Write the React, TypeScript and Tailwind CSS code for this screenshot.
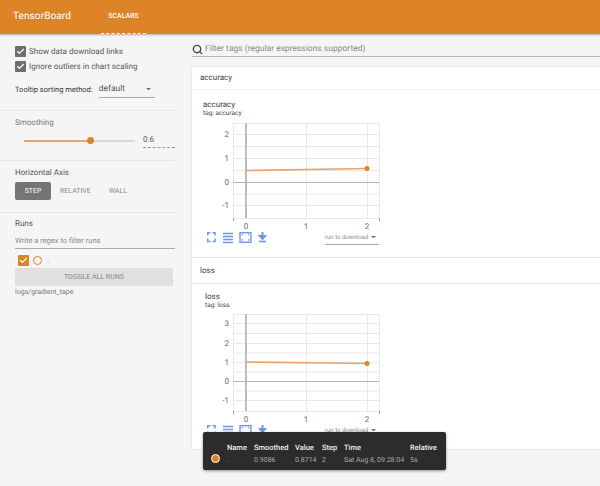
import { Check, Search } from 'lucide-react';

const orange = '#dd8426';

function TickBox({ color = 'bg-[#6e6e6e]' }: { color?: string }) {
  return (
    <span className={`flex h-[11px] w-[11px] items-center justify-center rounded-[1px] ${color}`}>
      <Check size={9} strokeWidth={3} className="text-white" />
    </span>
  );
}

function Divider() {
  return <div className="w-[175px] border-t border-[#e6e6e6]" />;
}

function Caret({ size = 5 }: { size?: number }) {
  return (
    <svg width={size} height={size / 2} viewBox="0 0 10 5" className="block">
      <path d="M0 0H10L5 5Z" fill="#757575" />
    </svg>
  );
}

function Chart({ ticks, y0, top, bottom, line }: {
  ticks: { label: string; y: number }[];
  y0: number;
  top: number;
  bottom: number;
  line: [number, number];
}) {
  // svg starts at x=200 of the page, coordinates below are local to it
  const minor = ticks.slice(0, -1).map((t, i) => (t.y + ticks[i + 1].y) / 2);
  return (
    <svg width="190" height={bottom + 12} className="block">
      <g stroke="#e8e8e8" strokeWidth="1">
        <rect x="33.5" y={top + 0.5} width="146" height={bottom - top} fill="none" />
        {[...ticks.map(t => t.y), ...minor].map(y => (
          <line key={y} x1="33" x2="179" y1={y + 0.5} y2={y + 0.5} />
        ))}
        <line x1="106.5" x2="106.5" y1={top} y2={bottom} />
        <line x1="167.5" x2="167.5" y1={top} y2={bottom} />
      </g>
      <line x1="46" x2="46" y1={top} y2={bottom} stroke="#bdbdbd" strokeWidth="2" />
      <line x1="33" x2="179" y1={y0 + 0.5} y2={y0 + 0.5} stroke="#b5b5b5" strokeWidth="1" />
      <g stroke="#9e9e9e">
        <line x1="33.5" x2="33.5" y1={bottom} y2={bottom + 3} />
        <line x1="179.5" x2="179.5" y1={bottom} y2={bottom + 3} />
      </g>
      <line x1="46" x2="167" y1={line[0]} y2={line[1]} stroke="#e9a36a" strokeWidth="1.6" />
      <circle cx="167" cy={line[1]} r="2.5" fill={orange} />
      <g fontSize="8" fill="#666" fontFamily="Roboto, sans-serif">
        {ticks.map(t => (
          <text key={t.label} x="29" y={t.y + 3} textAnchor="end">{t.label}</text>
        ))}
        <text x="46" y={bottom + 11} textAnchor="middle">0</text>
        <text x="106" y={bottom + 11} textAnchor="middle">1</text>
        <text x="167" y={bottom + 11} textAnchor="middle">2</text>
      </g>
    </svg>
  );
}

function ChartTools() {
  return (
    <div className="flex h-[15px] items-center">
      <svg width="72" height="12" viewBox="0 0 72 12" fill="none" stroke="#6a9ae6" strokeWidth="1.4" className="ml-[7px] block">
        <path d="M0.7 3.5V0.7H3.5M5.5 0.7H8V3.5M8 6.5V9.5H5.5M3.5 9.5H0.7V6.5" strokeWidth="1.5" />
        <path d="M16 1.5H26M16 4.5H26M16 7.5H26M16 10.5H26" strokeWidth="1.3" />
        <rect x="33" y="0.7" width="11" height="9.6" />
        <path d="M35 3.5V2.5H36M41 2.5H42V3.5M42 7V8.3H41M36 8.3H35V7" strokeWidth="1" />
        <path d="M55.5 0V4.5M53 4L55.5 7L58 4Z" strokeWidth="2" fill="#6a9ae6" />
        <path d="M52 9.5H59" strokeWidth="1.6" />
      </svg>
      <div className="ml-[46px] flex h-[15px] w-[54px] items-center justify-between border-b border-[#a8a8a8] pr-[3px] text-[6px] text-[#8a8a8a]">
        <span>run to download</span>
        <Caret />
      </div>
    </div>
  );
}

export default function App() {
  return (
    <div className="relative flex h-[486px] w-[600px] flex-col overflow-hidden bg-[#f5f5f5] font-['Roboto',sans-serif] [text-rendering:geometricPrecision]">
      <header className="flex h-[34px] shrink-0 items-stretch bg-[#dd8426] pl-[13px] shadow-[0_1px_2px_rgba(0,0,0,0.3)]">
        <div className="mr-[30px] flex w-[58px] items-center whitespace-nowrap text-[10.2px] text-white">TensorBoard</div>
        <div className="flex w-[45px] items-center justify-center border-b border-dashed border-white text-[7px] font-medium text-white">SCALARS</div>
      </header>

      <div className="flex min-h-0 flex-1">
        <aside className="w-[190px] shrink-0">
          <div className="flex flex-col gap-[3px] pl-[15px] pt-[11px] text-[8.1px] leading-[12px] text-[#555]">
            <label className="flex items-center gap-[3px]"><TickBox /> Show data download links</label>
            <label className="flex items-center gap-[3px]"><TickBox /> Ignore outliers in chart scaling</label>
          </div>
          <div className="mt-[9px] flex items-center pl-[15px] text-[7.5px] text-[#333]">
            <span>Tooltip sorting method:</span>
            <div className="ml-[6px] flex h-[17px] w-[56px] items-center justify-between border-b border-[#aaa] pr-[4px] text-[8.5px] text-[#555]">
              default
              <Caret />
            </div>
          </div>
          <div className="mt-[12px]"><Divider /></div>

          <div className="pl-[15px] pt-[6px] text-[8px] leading-[12px] text-[#777]">Smoothing</div>
          <div className="mt-[4px] flex items-center pl-[24px]">
            <div className="relative h-[2px] w-[111px] bg-[#d8d8d8]">
              <div className="h-full w-[67px] bg-[#e9a36a]" />
              <span className="absolute left-[63px] top-[-2.5px] h-[7px] w-[7px] rounded-full bg-[#dd8426]" />
            </div>
            <div className="ml-[8px] flex h-[15px] w-[32px] items-center border-b border-dashed border-[#999] text-[8px] text-[#555]">0.6</div>
          </div>
          <div className="mt-[12px]"><Divider /></div>

          <div className="pl-[15px] pt-[6px] text-[8px] leading-[12px] text-[#555]">Horizontal Axis</div>
          <div className="mt-[3px] flex items-center pl-[15px] text-[7px]">
            <div className="flex h-[18px] w-[36px] items-center justify-center rounded-[2px] bg-[#757575] text-white">STEP</div>
            <div className="ml-[9px] text-[#8a8a8a]">RELATIVE</div>
            <div className="ml-[18px] text-[#8a8a8a]">WALL</div>
          </div>
          <div className="mt-[12px]"><Divider /></div>

          <div className="pl-[15px] pt-[5px] text-[8px] leading-[12px] text-[#555]">Runs</div>
          <div className="ml-[15px] mt-[3px] flex h-[16px] w-[160px] items-center border-b border-[#aaa] text-[7.5px] text-[#8a8a8a]">Write a regex to filter runs</div>
          <div className="ml-[18px] mt-[6px] flex items-center">
            <TickBox color="bg-[#dd8426]" />
            <span className="ml-[4px] h-[9px] w-[9px] rounded-full border border-[#dd8426]" />
            <span className="ml-[5px] text-[8px] leading-[11px] text-[#777]">.</span>
          </div>
          <div className="ml-[15px] mt-[2px] flex h-[18px] w-[158px] items-center justify-center rounded-[1px] bg-[#e0e0de] text-[7px] font-medium text-[#999]">TOGGLE ALL RUNS</div>
          <div className="ml-[15px] text-[7px] leading-[12px] text-[#777]">logs/gradient_tape</div>
        </aside>

        <main className="min-w-0 flex-1">
          <div className="ml-[2px] flex h-[23px] items-center border-b border-[#bbb] pt-[8px] text-[#8a8a8a]">
            <Search size={11} strokeWidth={3} className="text-[#444]" />
            <span className="ml-[2px] text-[8.5px]">Filter tags (regular expressions supported)</span>
          </div>

          <section className="ml-[2px] mt-[10px] bg-white shadow-[0_0_2px_rgba(0,0,0,0.15)]">
            <div className="flex h-[23px] items-center border-b border-[#eee] pl-[8px] text-[8px] text-[#444]">accuracy</div>
            <div className="pl-[8px]">
              <div className="pl-[3px] pt-[11px] text-[8px] leading-[8px] text-[#444]">accuracy</div>
              <div className="mb-[1px] pl-[3px] text-[6.5px] leading-[8px] text-[#444]">tag: accuracy</div>
              <Chart
                top={5}
                bottom={100}
                y0={64}
                line={[52.5, 50.5]}
                ticks={[
                  { label: '2', y: 16 },
                  { label: '1', y: 40 },
                  { label: '0', y: 64 },
                  { label: '-1', y: 87 },
                ]}
              />
              <ChartTools />
            </div>
            <div className="mt-[12px] flex h-[27px] items-center border-y border-[#e6e6e6] pl-[8px] text-[8px] text-[#444]">loss</div>
            <div className="pb-[11px] pl-[8px]">
              <div className="pl-[5px] pt-[9px] text-[8px] leading-[8px] text-[#444]">loss</div>
              <div className="mb-[2px] pl-[5px] text-[6.5px] leading-[8px] text-[#444]">tag: loss</div>
              <Chart
                top={3}
                bottom={100}
                y0={70}
                line={[51, 52.5]}
                ticks={[
                  { label: '3', y: 12 },
                  { label: '2', y: 32 },
                  { label: '1', y: 51 },
                  { label: '0', y: 70 },
                  { label: '-1', y: 89 },
                ]}
              />
              <ChartTools />
            </div>
          </section>
        </main>
      </div>

      {/* chart tooltip */}
      <div className="absolute left-[203px] top-[432px] h-[38px] w-[243px] rounded-[2px] bg-[#2c2c2c] text-[7px] text-[#aaa] shadow-[0_1px_3px_rgba(0,0,0,0.4)]">
        <div className="grid grid-cols-[24px_27px_41px_27px_22px_66px_auto] pt-[10px]">
          <span />
          <span className="text-[7.5px] font-medium text-[#eee]">Name</span>
          <span className="text-[7.5px] font-medium text-[#eee]">Smoothed</span>
          <span className="text-[7.5px] font-medium text-[#eee]">Value</span>
          <span className="text-[7.5px] font-medium text-[#eee]">Step</span>
          <span className="text-[7.5px] font-medium text-[#eee]">Time</span>
          <span className="text-[7.5px] font-medium text-[#eee]">Relative</span>
          <span className="mt-[1px] ml-[8px] h-[9px] w-[9px] rounded-full border border-white bg-[#dd8426]" />
          <span className="mt-[2px]">.</span>
          <span className="mt-[2px]">0.9086</span>
          <span className="mt-[2px]">0.8714</span>
          <span className="mt-[2px]">2</span>
          <span className="mt-[2px] whitespace-nowrap">Sat Aug 8, 09:28:04</span>
          <span className="mt-[2px]">5s</span>
        </div>
      </div>
    </div>
  );
}
